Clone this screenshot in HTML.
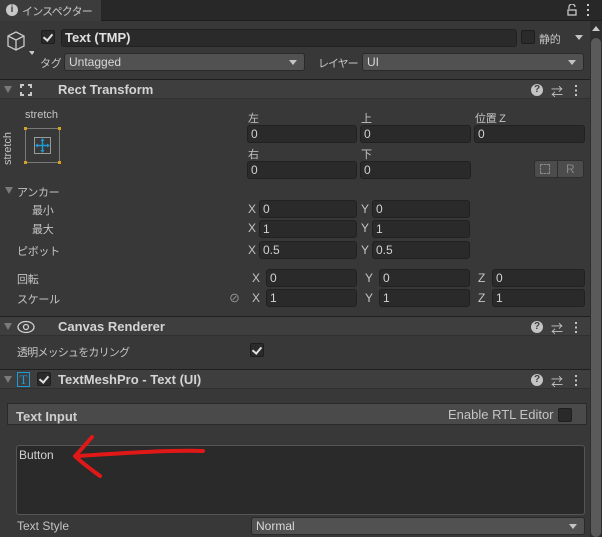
<!DOCTYPE html>
<html><head><meta charset="utf-8"><style>
*{box-sizing:border-box;margin:0;padding:0}
body{width:602px;height:537px;background:#383838;position:relative;overflow:hidden;font-family:"Liberation Sans","Noto Sans CJK JP",sans-serif;font-size:12px;color:#c4c4c4}
.a{position:absolute;white-space:nowrap}
.j{font-size:11px;letter-spacing:-0.3px}
.f{position:absolute;background:#2a2a2a;border:1px solid #212121;border-radius:3px;height:18px;padding-left:3px;line-height:16px;color:#d2d2d2}
.dd{position:absolute;background:#515151;border:1px solid #2a2a2a;border-radius:3px;height:18px;padding-left:4px;line-height:16px;color:#d8d8d8}
.dd:after{content:"";position:absolute;right:7px;top:6px;border-left:4px solid transparent;border-right:4px solid transparent;border-top:5px solid #c4c4c4}
.hd{position:absolute;left:0;width:590px;height:20px;background:#3e3e3e;border-top:1px solid #1f1f1f;border-bottom:1px solid #303030}
.hd b{position:absolute;top:2px;font-size:13px;color:#d4d4d4}
.tri{position:absolute;left:4px;top:6px;border-left:4px solid transparent;border-right:4px solid transparent;border-top:7px solid #7a7a7a}
.cb{position:absolute;width:14px;height:14px;background:#2a2a2a;border:1px solid #1e1e1e;border-radius:2px}
.cb.on:after{content:"";position:absolute;left:3px;top:1px;width:4px;height:7px;border:solid #e0e0e0;border-width:0 2px 2px 0;transform:rotate(40deg)}
</style></head><body>
<div class="a" style="left:0;top:0;width:602px;height:21px;background:#282828;border-bottom:1px solid #1e1e1e"></div>
<div class="a" style="left:0;top:0;width:101px;height:21px;background:#3c3c3c"></div>
<div class="a" style="left:6px;top:4px;width:12px;height:12px;border-radius:6px;background:#c8c8c8;color:#3c3c3c;font-size:10px;font-weight:bold;text-align:center;line-height:12px">i</div>
<div class="a j" style="left:22px;top:3px;color:#c8c8c8;letter-spacing:-0.8px">インスペクター</div>
<svg class="a" style="left:566px;top:4px" width="12" height="12"><path d="M3 5 V3 a3 3 0 0 1 6 0" fill="none" stroke="#c8c8c8" stroke-width="1.3"/><rect x="2" y="6" width="8" height="5" fill="none" stroke="#c8c8c8" stroke-width="1.3"/></svg>
<div class="a" style="left:587px;top:4px;width:2px;height:12px;background:repeating-linear-gradient(#c8c8c8 0 2px,transparent 2px 5px)"></div>
<!-- scrollbar -->
<div class="a" style="left:590px;top:21px;width:12px;height:516px;background:#2e2e2e"></div>
<div class="a" style="left:592px;top:26px;border-left:4px solid transparent;border-right:4px solid transparent;border-bottom:5px solid #c8c8c8"></div>
<div class="a" style="left:591px;top:38px;width:10px;height:499px;background:#5a5a5a;border-radius:5px"></div>
<!-- object header -->
<svg class="a" style="left:4px;top:29px" width="30" height="28"><path d="M4 7 L12 3 L20 7 L20 17 L12 21 L4 17 Z M4 7 L12 11 L20 7 M12 11 L12 21" fill="none" stroke="#c8c8c8" stroke-width="1.3"/><path d="M25 22 L31 22 L28 26Z" fill="#c8c8c8"/></svg>
<div class="cb on" style="left:41px;top:30px"></div>
<div class="f" style="left:61px;top:29px;width:456px;font-weight:bold;color:#e0e0e0;font-size:13px">Text (TMP)</div>
<div class="cb" style="left:521px;top:30px"></div>
<div class="a j" style="left:539px;top:31px">静的</div>
<div class="a" style="left:575px;top:35px;border-left:4px solid transparent;border-right:4px solid transparent;border-top:5px solid #c4c4c4"></div>
<div class="a j" style="left:40px;top:55px">タグ</div>
<div class="dd" style="left:64px;top:53px;width:241px">Untagged</div>
<div class="a j" style="left:318px;top:55px;letter-spacing:-1px">レイヤー</div>
<div class="dd" style="left:362px;top:53px;width:222px">UI</div>
<!-- Rect Transform -->
<div class="hd" style="top:79px"><div class="tri"></div><b style="left:58px">Rect Transform</b></div>
<svg class="a" style="left:19px;top:83px" width="14" height="14"><g fill="#c8c8c8"><path d="M1 1h4v2H3v2H1z M13 1H9v2h2v2h2z M1 13h4v-2H3V9H1z M13 13H9v-2h2V9h2z"/></g></svg>
<div class="a" style="left:531px;top:84px;width:12px;height:12px;border-radius:6px;background:#c4c4c4;color:#3e3e3e;font-size:10px;font-weight:bold;text-align:center;line-height:12px">?</div>
<div class="a" style="left:551px;top:83px">⇄</div>
<div class="a" style="left:575px;top:85px;width:2px;height:11px;background:repeating-linear-gradient(#c4c4c4 0 2px,transparent 2px 4.5px)"></div>
<div class="a" style="left:25px;top:109px;font-size:11px">stretch</div>
<div class="a" style="left:2px;top:165px;font-size:11px;transform:rotate(-90deg);transform-origin:0 0">stretch</div>
<svg class="a" style="left:24px;top:127px" width="38" height="38"><rect x="1.5" y="1.5" width="34" height="34" fill="none" stroke="#7a7a7a"/><rect x="0" y="0" width="3" height="3" fill="#d9a21c"/><rect x="34" y="0" width="3" height="3" fill="#d9a21c"/><rect x="0" y="34" width="3" height="3" fill="#d9a21c"/><rect x="34" y="34" width="3" height="3" fill="#d9a21c"/><rect x="10.5" y="10.5" width="16" height="16" fill="none" stroke="#9a9a9a"/><path d="M18.5 12V25M12 18.5H25" stroke="#1e9ad6" stroke-width="1.5"/><path d="M18.5 11l-2 3h4zM18.5 26l-2-3h4zM11 18.5l3-2v4zM26 18.5l-3-2v4z" fill="#1e9ad6"/></svg>
<div class="a j" style="left:248px;top:110px">左</div>
<div class="a j" style="left:361px;top:110px">上</div>
<div class="a j" style="left:475px;top:110px">位置 Z</div>
<div class="f" style="left:247px;top:125px;width:110px">0</div>
<div class="f" style="left:360px;top:125px;width:111px">0</div>
<div class="f" style="left:474px;top:125px;width:111px">0</div>
<div class="a j" style="left:248px;top:146px">右</div>
<div class="a j" style="left:361px;top:146px">下</div>
<div class="f" style="left:247px;top:161px;width:110px">0</div>
<div class="f" style="left:360px;top:161px;width:111px">0</div>
<div class="a" style="left:534px;top:160px;width:50px;height:18px;background:#4c4c4c;border:1px solid #2e2e2e;border-radius:3px"></div>
<div class="a" style="left:557px;top:160px;width:1px;height:18px;background:#2e2e2e"></div>
<div class="a" style="left:540px;top:164px;width:10px;height:10px;border:1px dashed #888"></div>
<div class="a" style="left:566px;top:162px;color:#888">R</div>
<div class="a" style="left:5px;top:187px;border-left:4px solid transparent;border-right:4px solid transparent;border-top:7px solid #7a7a7a"></div>
<div class="a j" style="left:17px;top:184px">アンカー</div>
<div class="a j" style="left:32px;top:202px">最小</div>
<div class="a j" style="left:32px;top:221px">最大</div>
<div class="a j" style="left:17px;top:243px">ピボット</div>
<div class="a" style="left:248px;top:202px">X</div><div class="f" style="left:259px;top:200px;width:98px">0</div>
<div class="a" style="left:361px;top:202px">Y</div><div class="f" style="left:372px;top:200px;width:98px">0</div>
<div class="a" style="left:248px;top:221px">X</div><div class="f" style="left:259px;top:220px;width:98px">1</div>
<div class="a" style="left:361px;top:221px">Y</div><div class="f" style="left:372px;top:220px;width:98px">1</div>
<div class="a" style="left:248px;top:243px">X</div><div class="f" style="left:259px;top:241px;width:98px">0.5</div>
<div class="a" style="left:361px;top:243px">Y</div><div class="f" style="left:372px;top:241px;width:98px">0.5</div>
<div class="a j" style="left:17px;top:271px">回転</div>
<div class="a j" style="left:17px;top:291px">スケール</div>
<div class="a" style="left:229px;top:290px;font-size:11px;color:#aaa">⊘</div>
<div class="a" style="left:252px;top:271px">X</div><div class="f" style="left:266px;top:269px;width:91px">0</div>
<div class="a" style="left:365px;top:271px">Y</div><div class="f" style="left:379px;top:269px;width:91px">0</div>
<div class="a" style="left:478px;top:271px">Z</div><div class="f" style="left:492px;top:269px;width:93px">0</div>
<div class="a" style="left:252px;top:291px">X</div><div class="f" style="left:266px;top:289px;width:91px">1</div>
<div class="a" style="left:365px;top:291px">Y</div><div class="f" style="left:379px;top:289px;width:91px">1</div>
<div class="a" style="left:478px;top:291px">Z</div><div class="f" style="left:492px;top:289px;width:93px">1</div>
<!-- Canvas Renderer -->
<div class="hd" style="top:316px"><div class="tri"></div><b style="left:58px">Canvas Renderer</b></div>
<svg class="a" style="left:17px;top:320px" width="18" height="14"><ellipse cx="9" cy="7" rx="8" ry="5.5" fill="none" stroke="#d0d0d0" stroke-width="1.3"/><circle cx="9" cy="7" r="2.5" fill="none" stroke="#d0d0d0" stroke-width="1.3"/></svg>
<div class="a" style="left:531px;top:321px;width:12px;height:12px;border-radius:6px;background:#c4c4c4;color:#3e3e3e;font-size:10px;font-weight:bold;text-align:center;line-height:12px">?</div>
<div class="a" style="left:551px;top:320px">⇄</div>
<div class="a" style="left:575px;top:322px;width:2px;height:11px;background:repeating-linear-gradient(#c4c4c4 0 2px,transparent 2px 4.5px)"></div>
<div class="a j" style="left:17px;top:344px;letter-spacing:-0.8px">透明メッシュをカリング</div>
<div class="cb on" style="left:250px;top:343px"></div>
<!-- TMP -->
<div class="hd" style="top:369px"><div class="tri"></div><b style="left:58px">TextMeshPro - Text (UI)</b></div>
<div class="a" style="left:17px;top:372px;width:13px;height:15px;border:1px solid #1e9ad6;color:#1e9ad6;font-size:13px;line-height:13px;text-align:center;font-family:'Liberation Serif',serif">T</div>
<div class="cb on" style="left:37px;top:372px"></div>
<div class="a" style="left:531px;top:374px;width:12px;height:12px;border-radius:6px;background:#c4c4c4;color:#3e3e3e;font-size:10px;font-weight:bold;text-align:center;line-height:12px">?</div>
<div class="a" style="left:551px;top:373px">⇄</div>
<div class="a" style="left:575px;top:375px;width:2px;height:11px;background:repeating-linear-gradient(#c4c4c4 0 2px,transparent 2px 4.5px)"></div>
<div class="a" style="left:7px;top:403px;width:580px;height:22px;background:#4a4a4a;border:1px solid #2a2a2a"></div>
<div class="a" style="left:16px;top:409px;font-weight:bold;font-size:13px;color:#cfcfcf">Text Input</div>
<div class="a" style="left:448px;top:407px;color:#c4c4c4;font-size:13px">Enable RTL Editor</div>
<div class="cb" style="left:558px;top:408px"></div>
<div class="a" style="left:16px;top:445px;width:569px;height:70px;background:#2a2a2a;border:1px solid #555;border-radius:3px"></div>
<div class="a" style="left:19px;top:448px;color:#d2d2d2">Button</div>
<svg class="a" style="left:0;top:430px" width="220" height="60"><path d="M203 21 C165 20 125 23 78 26 M92 7 C86 14 80 21 75 26 C82 33 92 40 100 46" fill="none" stroke="#e01818" stroke-width="4" stroke-linecap="round" stroke-linejoin="round"/></svg>
<div class="a" style="left:17px;top:519px">Text Style</div>
<div class="dd" style="left:251px;top:517px;width:334px">Normal</div>
</body></html>
